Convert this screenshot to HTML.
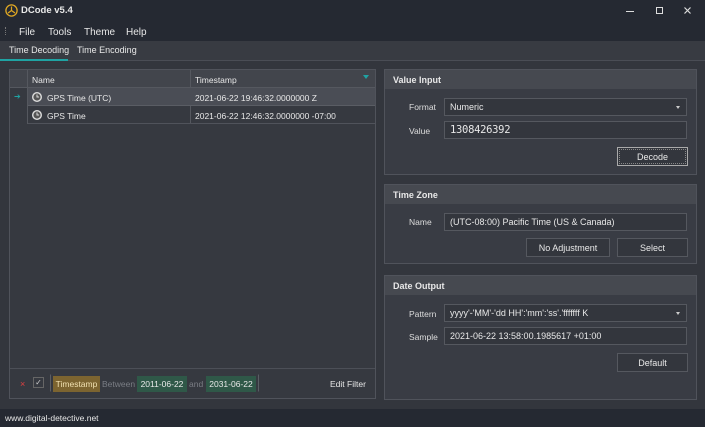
<html><head><style>
*{margin:0;padding:0;box-sizing:border-box}
body{width:705px;height:427px;background:#33363d;font-family:"Liberation Sans",sans-serif;font-size:9px;color:#e8e8e8;position:relative;overflow:hidden}
.a{position:absolute}
.title{left:0;top:0;width:705px;height:41px;background:#252932}
.tabs{left:0;top:41px;width:705px;height:20px;background:#383b42;border-bottom:1px solid #4a4d55}
.panel{background:#393c44;border:1px solid #50535b}
.ph{position:absolute;left:0;top:0;right:0;height:19px;background:#464950;font-weight:bold;padding:5px 0 0 8px;font-size:9px}
.inp{position:absolute;background:#33363d;border:1px solid #55585f;height:18px;padding:3px 5px;font-size:9px}
.btn{position:absolute;background:#33363d;border:1px solid #55585f;height:19px;text-align:center;padding-top:4px}
.lbl{position:absolute;font-size:8.5px;color:#ddd}
.dd:after{content:"";position:absolute;right:6px;top:7px;border:2.5px solid transparent;border-top:3px solid #ccc}
</style></head><body>
<div class="a title"></div>
<svg class="a" style="left:5px;top:4px" width="13" height="13" viewBox="0 0 13 13"><circle cx="6.5" cy="6.5" r="5.6" fill="none" stroke="#e0a823" stroke-width="1.3"/><path d="M6.5 6.5L6.5 2.5M6.5 6.5L3 9M6.5 6.5L10 9" stroke="#e0a823" stroke-width="1.2"/></svg>
<div class="a" style="left:21px;top:5px;font-weight:bold;font-size:9.5px">DCode v5.4</div>
<div class="a" style="left:626px;top:11px;width:8px;height:1px;background:#ddd"></div>
<div class="a" style="left:656px;top:7px;width:7px;height:7px;border:1px solid #ddd"></div>
<svg class="a" style="left:684px;top:7px" width="7" height="7"><path d="M0.5 0.5L6.5 6.5M6.5 0.5L0.5 6.5" stroke="#ddd" stroke-width="1.2"/></svg>
<div class="a" style="left:5px;top:27px;width:1px;height:8px;border-left:1px dotted #777"></div>
<div class="a" style="left:19px;top:27px;font-size:10px">File</div>
<div class="a" style="left:48px;top:27px;font-size:10px">Tools</div>
<div class="a" style="left:84px;top:27px;font-size:10px">Theme</div>
<div class="a" style="left:126px;top:27px;font-size:10px">Help</div>
<div class="a tabs"></div>
<div class="a" style="left:9px;top:45px">Time Decoding</div>
<div class="a" style="left:0;top:59px;width:68px;height:2px;background:#1fa3a3"></div>
<div class="a" style="left:77px;top:45px">Time Encoding</div>

<div class="a panel" style="left:9px;top:69px;width:367px;height:330px;background:#363940"></div>
<div class="a" style="left:10px;top:70px;width:365px;height:18px;background:#42454c;border-bottom:1px solid #55585f"></div>
<div class="a" style="left:27px;top:70px;width:1px;height:54px;background:#55585f"></div>
<div class="a" style="left:190px;top:70px;width:1px;height:54px;background:#55585f"></div>
<div class="a" style="left:32px;top:75px;font-size:8.5px">Name</div>
<div class="a" style="left:195px;top:75px;font-size:8.5px">Timestamp</div>
<div class="a" style="left:363px;top:75px;border:3px solid transparent;border-top:4px solid #1fa3a3"></div>
<div class="a" style="left:28px;top:88px;width:347px;height:18px;background:#4a4d55;border-bottom:1px solid #5a5d64"></div>
<div class="a" style="left:28px;top:106px;width:347px;height:18px;border-bottom:1px solid #50535b"></div>
<div class="a" style="left:14px;top:92px;color:#1fa3a3;font-size:8px">➔</div>
<svg class="a" style="left:31px;top:91px" width="12" height="12"><circle cx="6" cy="6" r="5" fill="#ddd"/><circle cx="6" cy="6" r="3.6" fill="#555"/><path d="M6 3.5V6H8" stroke="#ddd" stroke-width="1" fill="none"/></svg>
<svg class="a" style="left:31px;top:109px" width="12" height="12"><circle cx="6" cy="6" r="5" fill="#ddd"/><circle cx="6" cy="6" r="3.6" fill="#555"/><path d="M6 3.5V6H8" stroke="#ddd" stroke-width="1" fill="none"/></svg>
<div class="a" style="left:47px;top:93px;font-size:8.5px">GPS Time (UTC)</div>
<div class="a" style="left:47px;top:111px;font-size:8.5px">GPS Time</div>
<div class="a" style="left:195px;top:93px;font-size:8.5px">2021-06-22 19:46:32.0000000 Z</div>
<div class="a" style="left:195px;top:111px;font-size:8.5px">2021-06-22 12:46:32.0000000 -07:00</div>
<div class="a" style="left:10px;top:368px;width:365px;height:1px;background:#4c4f57"></div>
<div class="a" style="left:20px;top:379px;color:#e04040;font-size:9px">×</div>
<div class="a" style="left:33px;top:377px;width:11px;height:11px;border:1px solid #666;color:#ccc;font-size:8px;text-align:center;line-height:9px">✓</div>
<div class="a" style="left:50px;top:374px;width:209px;height:18px;border:1px solid #5a5d64;border-top-color:transparent;border-bottom-color:transparent"></div>
<div class="a" style="left:53px;top:376px;width:47px;height:16px;background:#7c6430;color:#f0e0b0;text-align:center;padding-top:3px;font-size:8.5px">Timestamp</div>
<div class="a" style="left:102px;top:379px;color:#7a7d84;font-size:8.5px">Between</div>
<div class="a" style="left:137px;top:376px;width:50px;height:16px;background:#2f5848;text-align:center;padding-top:3px;font-size:8.5px">2011-06-22</div>
<div class="a" style="left:189px;top:379px;color:#7a7d84;font-size:8.5px">and</div>
<div class="a" style="left:206px;top:376px;width:50px;height:16px;background:#2f5848;text-align:center;padding-top:3px;font-size:8.5px">2031-06-22</div>
<div class="a" style="left:330px;top:379px;font-size:8.5px">Edit Filter</div>

<div class="a panel" style="left:384px;top:69px;width:313px;height:106px"><div class="ph">Value Input</div></div>
<div class="lbl" style="left:409px;top:102px">Format</div>
<div class="inp dd" style="left:444px;top:98px;width:243px">Numeric</div>
<div class="lbl" style="left:409px;top:126px">Value</div>
<div class="inp" style="left:444px;top:121px;width:243px;font-size:10.5px;padding-top:2px;font-family:'DejaVu Sans Mono',monospace;letter-spacing:-0.3px">1308426392</div>
<div class="btn" style="left:617px;top:147px;width:71px;border:1px solid #aaa"><div class="a" style="left:1px;top:1px;right:1px;bottom:1px;border:1px dotted #888"></div>Decode</div>

<div class="a panel" style="left:384px;top:184px;width:313px;height:80px"><div class="ph">Time Zone</div></div>
<div class="lbl" style="left:409px;top:217px">Name</div>
<div class="inp" style="left:444px;top:213px;width:243px">(UTC-08:00) Pacific Time (US &amp; Canada)</div>
<div class="btn" style="left:526px;top:238px;width:84px">No Adjustment</div>
<div class="btn" style="left:617px;top:238px;width:71px">Select</div>

<div class="a panel" style="left:384px;top:275px;width:313px;height:125px"><div class="ph">Date Output</div></div>
<div class="lbl" style="left:409px;top:309px">Pattern</div>
<div class="inp dd" style="left:444px;top:304px;width:243px">yyyy'-'MM'-'dd HH':'mm':'ss'.'fffffff K</div>
<div class="lbl" style="left:409px;top:332px">Sample</div>
<div class="inp" style="left:444px;top:327px;width:243px">2021-06-22 13:58:00.1985617 +01:00</div>
<div class="btn" style="left:617px;top:353px;width:71px">Default</div>

<div class="a" style="left:0;top:409px;width:705px;height:18px;background:#252932"></div>
<div class="a" style="left:5px;top:413px;font-size:8.5px">www.digital-detective.net</div>
</body></html>
